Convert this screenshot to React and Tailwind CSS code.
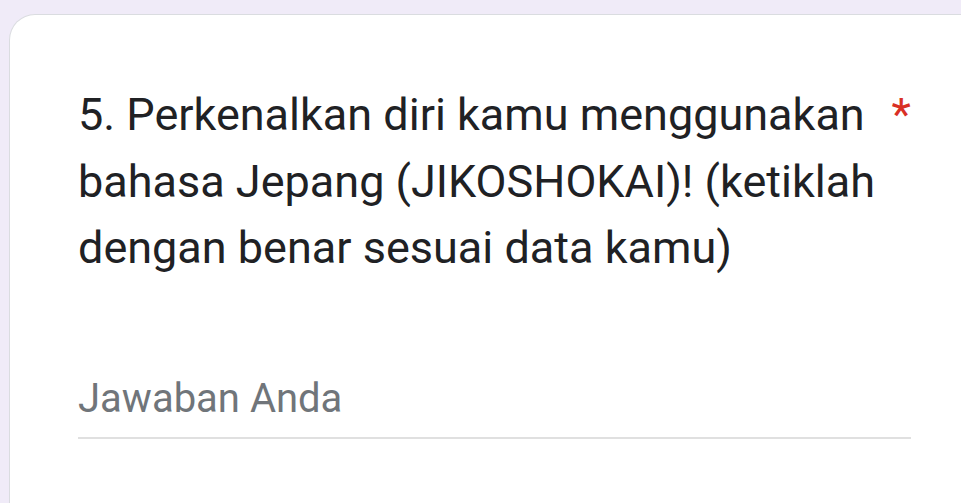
export default function App() {
  return (
    <div className="h-[503px] w-full overflow-hidden bg-[#f0ebf8] pl-[9px] pt-[14px]" style={{ fontFamily: "Roboto, 'Noto Sans', sans-serif" }}>
      <div className="-mr-8 h-[489px] rounded-tl-[26px] rounded-tr-[26px] border border-b-0 border-[#dadce0] bg-white pl-[68px] pr-[82px] pt-[67px]">
        <div className="flex w-[833px] items-start">
          <h2 className="w-[810px] text-[45px] leading-[66.5px] font-normal text-[#202124]">
            5. Perkenalkan diri kamu menggunakan bahasa Jepang (JIKOSHOKAI)! (ketiklah dengan benar sesuai data kamu)
          </h2>
          <span className="ml-auto text-[45px] leading-[66.5px] text-[#d93025]">*</span>
        </div>
        <div className="mt-[95px] w-[833px] border-b-2 border-[#e0e0e0] pb-[16px]">
          <span className="text-[40px] leading-[44px] text-[#70757a]">Jawaban Anda</span>
        </div>
      </div>
    </div>
  );
}
